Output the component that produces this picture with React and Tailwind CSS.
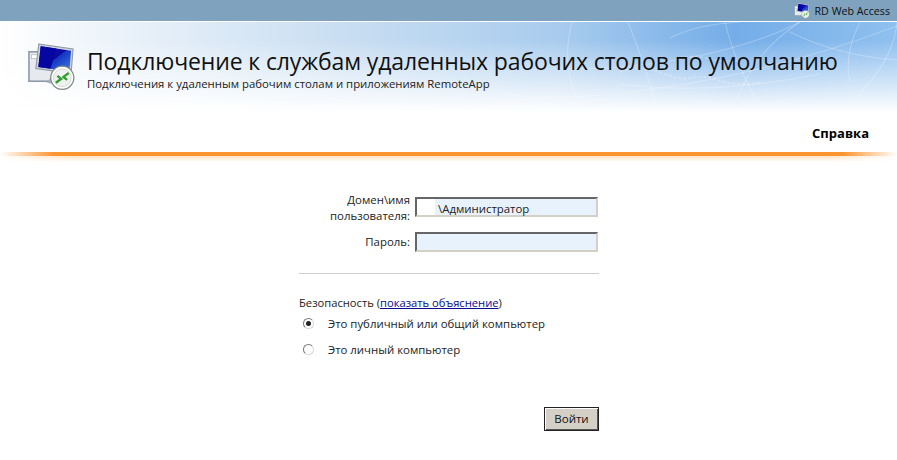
const F = "font-['Open_Sans','Noto_Sans',sans-serif]";

function BigIcon({ className }) {
  return (
    <svg viewBox="0 0 50 50" className={className}>
      <defs>
        <linearGradient id="scr" x1="0" y1="0" x2="1" y2="1">
          <stop offset="0" stopColor="#1414c8" />
          <stop offset="0.5" stopColor="#0a0a9c" />
          <stop offset="0.51" stopColor="#1433c4" />
          <stop offset="1" stopColor="#3f7fe0" />
        </linearGradient>
        <linearGradient id="stand" x1="0" y1="0" x2="1" y2="0">
          <stop offset="0" stopColor="#9aa3ad" />
          <stop offset="1" stopColor="#e4e8ec" />
        </linearGradient>
      </defs>
      <rect x="2" y="9" width="26" height="30" fill="#e6e9ed" stroke="#8c98a6" strokeWidth="1.6" />
      <rect x="4.5" y="12" width="21" height="4" fill="#ffffff" stroke="#aab4bf" strokeWidth="0.7" />
      <path d="M12 1 L47 6 L45 31 L9 26 Z" fill="#cdd3da" stroke="#8f99a3" strokeWidth="1.1" />
      <path d="M14 3.2 L45 7.8 L43.2 29.2 L11.6 24.4 Z" fill="url(#scr)" />
      <path d="M14 3.2 L30 5.6 L24 26.3 L11.6 24.4 Z" fill="#0606a0" />
      <path d="M25 28 L34 30 L36 38 C30 42 24 42 20 40 C24 37 25 33 25 28 Z" fill="url(#stand)" />
      <circle cx="36" cy="35.5" r="11.8" fill="#ffffff" stroke="#7f8a86" strokeWidth="1.3" />
      <circle cx="36" cy="35.5" r="9" fill="#eef1ee" stroke="#cfd5d0" strokeWidth="0.9" />
      <path d="M29.4 40.6 L34.8 36.6 L31 33.6" fill="none" stroke="#2f9e2f" strokeWidth="2.4" />
      <path d="M42.6 30.6 L37.2 34.6 L41 37.6" fill="none" stroke="#2f9e2f" strokeWidth="2.4" />
    </svg>
  );
}

function Globe() {
  return (
    <svg viewBox="0 0 397 90" preserveAspectRatio="none" className="absolute right-0 top-0 h-[90px] w-[397px]">
      <g fill="none" stroke="#ffffff" strokeOpacity="0.25" strokeWidth="1.1">
        <path d="M72 0 C64 30 66 60 84 90" />
        <path d="M0 72 C90 84 250 60 397 4" />
        <path d="M60 46 C120 50 230 36 300 0" />
        <path d="M128 0 C140 30 150 60 158 90" />
        <path d="M225 0 C232 30 244 56 262 90" />
        <path d="M300 0 C270 20 250 40 232 90" />
        <path d="M340 90 C375 60 395 30 397 0" />
        <path d="M360 0 C350 20 345 40 350 60" />
        <path d="M170 16 C190 6 210 2 240 0" />
        <path d="M120 62 C180 70 250 66 320 52" />
        <path d="M290 10 C330 30 370 36 397 38" />
      </g>
      <g fill="none" stroke="#ffffff" strokeOpacity="0.24" strokeWidth="2" strokeDasharray="3 2">
        <path d="M120 50 C150 38 170 60 190 56 C215 50 220 68 262 60" />
        <path d="M180 36 C200 30 222 44 240 38" />
      </g>
    </svg>
  );
}

export default function App() {
  return (
    <div className={`${F} h-[460px] w-[897px] overflow-hidden bg-white text-[#222]`}>
      <div className="flex h-[21px] items-center justify-end bg-[#7fa3bf] pr-[7px]">
        <BigIcon className="mr-[5px] h-[16px] w-[16px]" />
        <span className="text-[10.7px] leading-[20px] text-[#111]">RD Web Access</span>
      </div>
      <div className="h-px bg-white" />
      <div className="relative h-[130px]">
        <div className="absolute inset-x-0 top-0 h-[90px] bg-[linear-gradient(to_bottom,rgba(255,255,255,0)_0%,rgba(255,255,255,0)_20%,rgba(255,255,255,1)_100%),linear-gradient(to_right,#ffffff_0%,#ecf3fa_12%,#c9def2_38%,#a9ccee_62%,#74ade8_82%,#8fc0ef_100%)]">
          <Globe />
        </div>
        <div className="relative flex items-start pl-[27px] pt-[21px]">
          <BigIcon className="h-[49px] w-[49px] shrink-0" />
          <div className="ml-[11px] pt-[2px]">
            <h1 className="whitespace-nowrap text-[23px] font-normal leading-[32px] tracking-[-0.13px] text-[#111]">
              Подключение к службам удаленных рабочих столов по умолчанию
            </h1>
            <p className="-mt-[1px] whitespace-nowrap text-[11.37px] leading-[15px] text-[#222]">
              Подключения к удаленным рабочим столам и приложениям RemoteApp
            </p>
          </div>
        </div>
        <a className="absolute right-[28px] top-[102px] text-[13px] font-bold leading-[18px] text-black">Справка</a>
      </div>
      <div className="h-[4px] bg-[linear-gradient(to_right,#ffffff_0%,#fb9530_6%,#fb9530_94%,#ffffff_100%)]" />
      <div className="h-[6px] bg-[linear-gradient(to_bottom,#fde2c4,#ffffff)] [mask-image:linear-gradient(to_right,transparent,black_8%,black_92%,transparent)]" />

      <div className="ml-[299px] mt-[35px] w-[300px] text-[11.4px] text-[#222]">
        <div className="flex items-start">
          <label className="-mt-[5px] w-[112px] pr-[1px] text-right leading-[16px]">
            Домен\имя пользователя:
          </label>
          <div className="ml-[4px] flex h-[20px] w-[183px] items-center border-2 border-b-[#d4d0c8] border-l-[#666] border-r-[#d4d0c8] border-t-[#666] bg-[#e8f2fd]">
            <span className="h-full w-[18px] bg-white" />
            <span className="ml-[3px] mt-[3px] leading-[16px]">\Администратор</span>
          </div>
        </div>
        <div className="mt-[8px] flex items-center">
          <label className="w-[112px] pr-[1px] text-right leading-[20px]">Пароль:</label>
          <div className="ml-[4px] h-[20px] w-[183px] border-2 border-b-[#d4d0c8] border-l-[#666] border-r-[#d4d0c8] border-t-[#666] bg-[#e8f2fd]" />
        </div>
        <div className="mt-[21px] h-px bg-[#cccccc]" />
        <p className="mt-[21px] text-[11.2px] leading-[16px]">
          Безопасность (<a className="text-[#0a0a8c] underline">показать объяснение</a>)
        </p>
        <div className="mt-[5px] flex items-center leading-[16px]">
          <span className="-mt-[2px] ml-[4px] flex h-[11px] w-[11px] items-center justify-center rounded-full border border-[#d8d8d8] border-t-[#777] border-l-[#777] bg-white">
            <span className="h-[5px] w-[5px] rounded-full bg-[#222]" />
          </span>
          <span className="ml-[14px]">Это публичный или общий компьютер</span>
        </div>
        <div className="mt-[10px] flex items-center leading-[16px]">
          <span className="-mt-[2px] ml-[4px] h-[11px] w-[11px] rounded-full border border-[#d8d8d8] border-t-[#777] border-l-[#777] bg-white" />
          <span className="ml-[14px]">Это личный компьютер</span>
        </div>
        <div className="mt-[49px] flex justify-end">
          <button className="h-[24px] w-[55px] border border-[#222] bg-[#d4d0c8] text-[11.5px] leading-[18px] text-[#111] shadow-[inset_1px_1px_0_#fff,inset_-1px_-1px_0_#555]">
            Войти
          </button>
        </div>
      </div>
    </div>
  );
}
